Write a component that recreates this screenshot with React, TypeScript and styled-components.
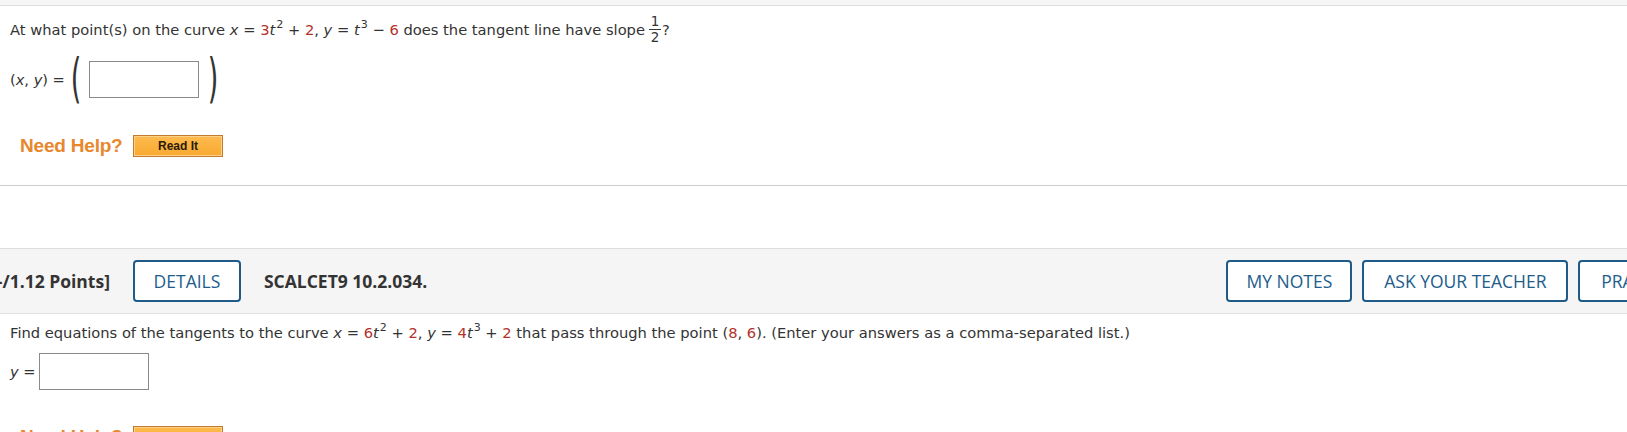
import React from "react";
import styled, { createGlobalStyle } from "styled-components";

const GlobalStyle = createGlobalStyle`
  html, body {
    margin: 0;
    padding: 0;
    background: #ffffff;
    overflow: hidden;
  }
  body {
    font-family: "DejaVu Sans", Verdana, sans-serif;
    color: #333333;
  }
`;

const Page = styled.div`
  width: 1800px;
  display: flex;
  flex-direction: column;
`;

const TopStrip = styled.div`
  height: 5px;
  background: #f6f6f6;
  border-bottom: 1px solid #dddddd;
`;

const QuestionBlock = styled.section<{ $last?: boolean }>`
  display: flex;
  flex-direction: column;
  padding: ${(p) => (p.$last ? "9px 0 0 10px" : "10px 0 28px 10px")};
  border-bottom: ${(p) => (p.$last ? "none" : "1px solid #cccccc")};
`;

const QuestionText = styled.div`
  font-size: 14.7px;
  line-height: 20px;
  height: 20px;
  white-space: nowrap;
  color: #333333;
`;

const V = styled.i`
  font-style: italic;
`;

const Num = styled.span`
  color: #b3322b;
`;

const Sup = styled.sup`
  font-size: 11px;
  line-height: 0;
  vertical-align: 7px;
  margin-left: 1px;
`;

const Frac = styled.span`
  display: inline-flex;
  flex-direction: column;
  align-items: center;
  vertical-align: middle;
  font-size: 13.5px;
  line-height: 13px;
  margin: 0 1px 0 4px;
  position: relative;
  top: -1px;
`;

const FracLine = styled.span`
  display: block;
  width: 12px;
  height: 1px;
  background: #333333;
  margin: 1px 0;
`;

const AnswerRow = styled.div<{ $gap: number }>`
  display: flex;
  align-items: center;
  margin-top: ${(p) => p.$gap}px;
  font-size: 14.6px;
  white-space: nowrap;
`;

const Label = styled.span`
  margin-right: 3px;
`;

const Paren = styled.span<{ $side: "left" | "right" }>`
  font-family: "DejaVu Sans", sans-serif;
  font-weight: 400;
  font-size: 54px;
  line-height: 54px;
  height: 54px;
  width: 16px;
  display: inline-flex;
  justify-content: center;
  transform: scaleX(0.5);
  color: #333333;
  margin: ${(p) => (p.$side === "left" ? "0 5px 0 0" : "0 0 0 6px")};
`;

const InputBox = styled.div<{ $w: number; $h: number }>`
  width: ${(p) => p.$w}px;
  height: ${(p) => p.$h}px;
  box-sizing: border-box;
  border: 1px solid #8a8a8a;
  background: #ffffff;
`;

const HelpRow = styled.div<{ $gap: number }>`
  display: flex;
  align-items: center;
  gap: 11px;
  margin-top: ${(p) => p.$gap}px;
  padding-left: 10px;
`;

const NeedHelp = styled.span`
  font-family: "Liberation Sans", Arial, sans-serif;
  font-weight: 700;
  font-size: 19px;
  color: #e8872d;
  letter-spacing: -0.2px;
  width: 102px;
  white-space: nowrap;
`;

const ReadIt = styled.button`
  width: 90px;
  height: 22px;
  box-sizing: border-box;
  border: 1px solid #c27a2e;
  box-shadow: inset 0 0 0 1px #fdd08a;
  background: linear-gradient(#fdbb4e, #f8a930);
  font-family: "Liberation Sans", Arial, sans-serif;
  font-weight: 700;
  font-size: 12px;
  color: #2a1a08;
  padding: 0;
  cursor: pointer;
`;

const Gap = styled.div`
  height: 62px;
`;

const Header = styled.div`
  display: flex;
  align-items: center;
  height: 64px;
  background: #f5f5f5;
  border-top: 1px solid #dddddd;
  border-bottom: 1px solid #e2e2e2;
  font-family: "Open Sans", sans-serif;
`;

const Points = styled.span`
  font-weight: 700;
  font-size: 17.5px;
  color: #333333;
  margin-left: -9px;
  white-space: nowrap;
`;

const Code = styled.span`
  font-weight: 700;
  font-size: 17.5px;
  color: #333333;
  white-space: nowrap;
  margin-left: 23px;
`;

const OutlineButton = styled.button<{ $w: number }>`
  width: ${(p) => p.$w}px;
  height: 42px;
  box-sizing: border-box;
  border: 2px solid #1f5b88;
  border-radius: 4px;
  background: #ffffff;
  color: #215d8b;
  font-family: "Open Sans", sans-serif;
  font-size: 17.5px;
  white-space: nowrap;
  padding: 0;
  cursor: pointer;
`;

const LeftGroup = styled.div`
  display: flex;
  align-items: center;
  gap: 23px;
`;

const RightGroup = styled.div`
  display: flex;
  align-items: center;
  gap: 10px;
  margin-left: 799px;
`;

export default function App() {
  return (
    <>
      <GlobalStyle />
      <Page>
        <TopStrip />
        <QuestionBlock>
          <QuestionText>
            At what point(s) on the curve <V>x</V> = <Num>3</Num>
            <V>t</V>
            <Sup>2</Sup> + <Num>2</Num>, <V>y</V> = <V>t</V>
            <Sup>3</Sup> − <Num>6</Num> does the tangent line have slope
            <Frac>
              <span>1</span>
              <FracLine />
              <span>2</span>
            </Frac>
            ?
          </QuestionText>
          <AnswerRow $gap={16}>
            <Label>
              (<V>x</V>, <V>y</V>) =
            </Label>
            <Paren $side="left">(</Paren>
            <InputBox $w={110} $h={37} />
            <Paren $side="right">)</Paren>
          </AnswerRow>
          <HelpRow $gap={29}>
            <NeedHelp>Need Help?</NeedHelp>
            <ReadIt>Read It</ReadIt>
          </HelpRow>
        </QuestionBlock>
        <Gap />
        <Header>
          <LeftGroup>
            <Points>[-/1.12 Points]</Points>
            <OutlineButton $w={108}>DETAILS</OutlineButton>
          </LeftGroup>
          <Code>SCALCET9 10.2.034.</Code>
          <RightGroup>
            <OutlineButton $w={126}>MY NOTES</OutlineButton>
            <OutlineButton $w={206}>ASK YOUR TEACHER</OutlineButton>
            <OutlineButton $w={210}>PRACTICE ANOTHER</OutlineButton>
          </RightGroup>
        </Header>
        <QuestionBlock $last>
          <QuestionText>
            Find equations of the tangents to the curve <V>x</V> ={" "}
            <Num>6</Num>
            <V>t</V>
            <Sup>2</Sup> + <Num>2</Num>, <V>y</V> = <Num>4</Num>
            <V>t</V>
            <Sup>3</Sup> + <Num>2</Num> that pass through the point (
            <Num>8</Num>, <Num>6</Num>). (Enter your answers as a
            comma-separated list.)
          </QuestionText>
          <AnswerRow $gap={10}>
            <Label>
              <V>y</V> =
            </Label>
            <InputBox $w={110} $h={37} />
          </AnswerRow>
          <HelpRow $gap={36}>
            <NeedHelp>Need Help?</NeedHelp>
            <ReadIt>Read It</ReadIt>
          </HelpRow>
        </QuestionBlock>
      </Page>
    </>
  );
}
